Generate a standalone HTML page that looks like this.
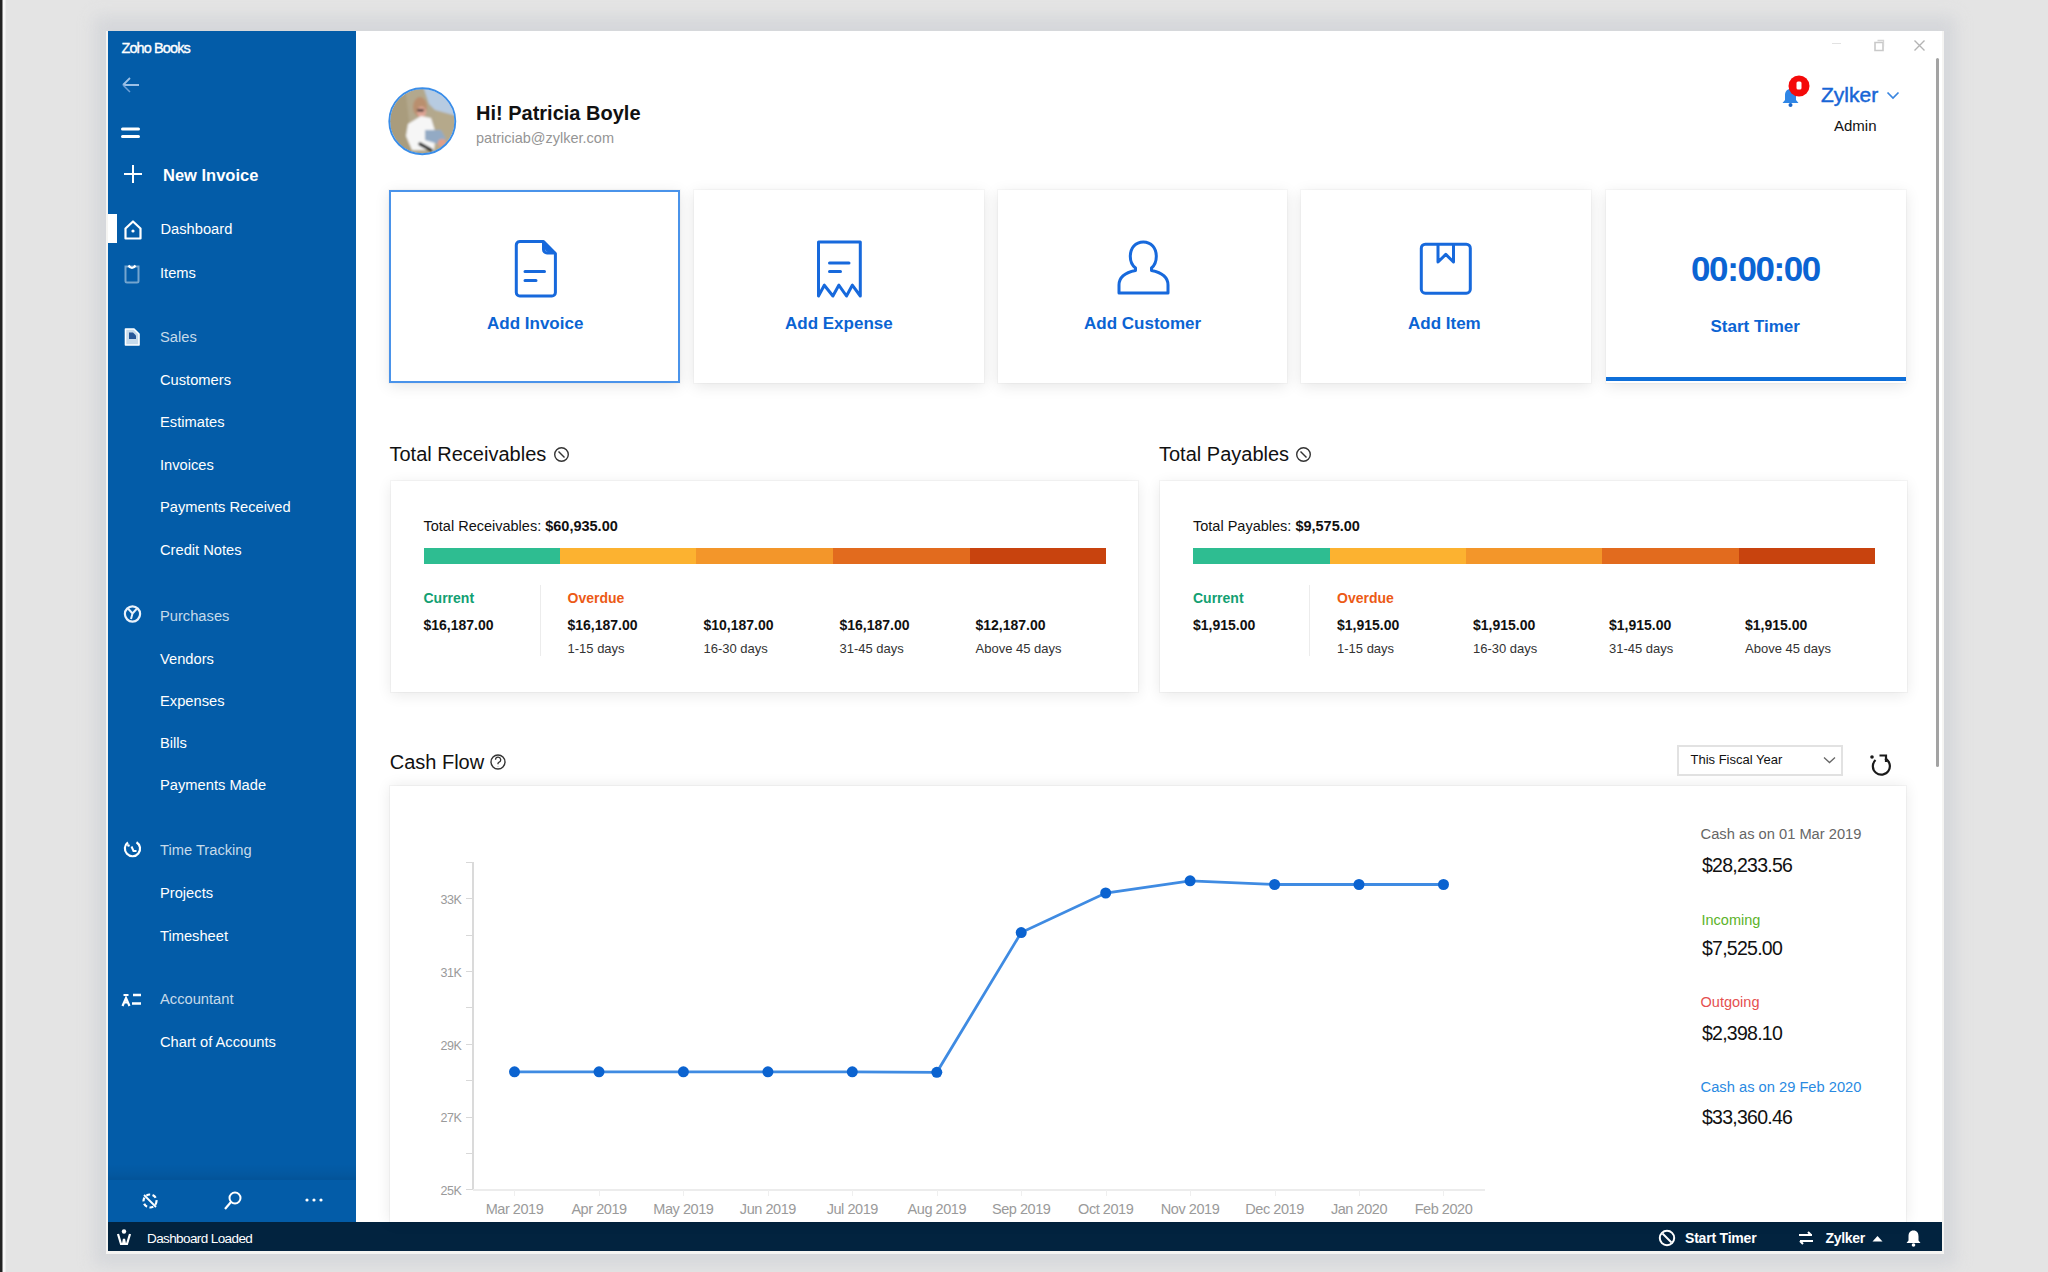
<!DOCTYPE html>
<html><head><meta charset="utf-8">
<style>
*{margin:0;padding:0;box-sizing:border-box}
html,body{width:2048px;height:1272px;overflow:hidden;background:#e4e4e4;font-family:"Liberation Sans", sans-serif}
.a{position:absolute}
.t{position:absolute;line-height:1;white-space:nowrap}
#wrap{position:absolute;left:0;top:0;width:2048px;height:1272px;}
</style></head><body><div id="wrap">
<div class="a" style="left:0px;top:0px;width:6px;height:1272px;background:linear-gradient(90deg,#232323 0,#232323 1.5px,#f8f8f8 3.5px,#f8f8f8 5px,#e4e4e4 6px)"></div>
<div class="a" style="left:94px;top:16px;width:1862px;height:1250px;background:#d3d5d9;filter:blur(8px);opacity:.85"></div>
<div class="a" style="left:106px;top:31px;width:1838px;height:1223px;background:#f5f4f2"></div>
<div class="a" style="left:108px;top:31px;width:1834px;height:1220px;background:#fff"></div>
<div class="a" style="left:108px;top:31px;width:248px;height:1191px;background:#035ca8"></div>
<div class="a" style="left:108px;top:1164px;width:248px;height:15px;background:linear-gradient(180deg,rgba(0,0,0,0) 0,rgba(0,0,0,.05) 70%,rgba(0,0,0,.09) 100%)"></div>
<div class="a" style="left:108px;top:1179px;width:248px;height:1px;background:rgba(0,0,0,.08)"></div>
<div class="t" style="left:121.5px;top:40.6px;font-size:14.5px;color:#ffffff;font-weight:normal;letter-spacing:-0.9px;-webkit-text-stroke:0.35px #fff">Zoho Books</div>
<svg class="a" style="left:120px;top:75px;" width="22" height="20" viewBox="0 0 22 20"><path d="M19 10H3.5M10 3L3 10" stroke="#9cc0e6" stroke-width="1.8" fill="none"/><path d="M3 10l7 7" stroke="#6e9fd6" stroke-width="1.5" fill="none"/></svg>
<svg class="a" style="left:120px;top:122px;" width="22" height="20" viewBox="0 0 22 20"><path d="M2.5 7h16M2.5 14.6h16" stroke="#fff" stroke-width="3" fill="none" stroke-linecap="round"/></svg>
<svg class="a" style="left:123px;top:164px;" width="20" height="20" viewBox="0 0 20 20"><path d="M10 1v18M1 10h18" stroke="#fff" stroke-width="2" fill="none"/></svg>
<div class="t" style="left:163.0px;top:166.9px;font-size:16.5px;color:#ffffff;font-weight:bold;">New Invoice</div>
<div class="a" style="left:108px;top:214px;width:9px;height:29px;background:#fff"></div>
<svg class="a" style="left:123px;top:219px;" width="20" height="22" viewBox="0 0 20 22"><path d="M2.5 9.5L10 2.5l7.5 7V19.5h-15z" stroke="#fff" stroke-width="2.2" fill="none" stroke-linejoin="round"/><circle cx="10" cy="12" r="1.6" fill="#fff"/></svg>
<div class="t" style="left:160.5px;top:222.1px;font-size:14.7px;color:#ffffff;font-weight:normal;">Dashboard</div>
<svg class="a" style="left:122px;top:262px;" width="20" height="22" viewBox="0 0 20 22"><path d="M3.5 4.5h13v14.5a1.5 1.5 0 0 1-1.5 1.5H5a1.5 1.5 0 0 1-1.5-1.5z" stroke="rgba(255,255,255,.45)" stroke-width="2" fill="none"/><path d="M6.5 3.5q3.5 5 7 0" stroke="#fff" stroke-width="2.2" fill="none"/></svg>
<div class="t" style="left:160.0px;top:266.1px;font-size:14.7px;color:#ffffff;font-weight:normal;">Items</div>
<div class="t" style="left:160.0px;top:330.1px;font-size:14.7px;color:rgba(255,255,255,.78);font-weight:normal;">Sales</div>
<div class="t" style="left:160.0px;top:373.1px;font-size:14.7px;color:#ffffff;font-weight:normal;">Customers</div>
<div class="t" style="left:160.0px;top:415.1px;font-size:14.7px;color:#ffffff;font-weight:normal;">Estimates</div>
<div class="t" style="left:160.0px;top:458.1px;font-size:14.7px;color:#ffffff;font-weight:normal;">Invoices</div>
<div class="t" style="left:160.0px;top:500.1px;font-size:14.7px;color:#ffffff;font-weight:normal;">Payments Received</div>
<div class="t" style="left:160.0px;top:543.1px;font-size:14.7px;color:#ffffff;font-weight:normal;">Credit Notes</div>
<div class="t" style="left:160.0px;top:609.1px;font-size:14.7px;color:rgba(255,255,255,.78);font-weight:normal;">Purchases</div>
<div class="t" style="left:160.0px;top:651.6px;font-size:14.7px;color:#ffffff;font-weight:normal;">Vendors</div>
<div class="t" style="left:160.0px;top:693.6px;font-size:14.7px;color:#ffffff;font-weight:normal;">Expenses</div>
<div class="t" style="left:160.0px;top:736.1px;font-size:14.7px;color:#ffffff;font-weight:normal;">Bills</div>
<div class="t" style="left:160.0px;top:778.1px;font-size:14.7px;color:#ffffff;font-weight:normal;">Payments Made</div>
<div class="t" style="left:160.0px;top:843.1px;font-size:14.7px;color:rgba(255,255,255,.78);font-weight:normal;">Time Tracking</div>
<div class="t" style="left:160.0px;top:886.1px;font-size:14.7px;color:#ffffff;font-weight:normal;">Projects</div>
<div class="t" style="left:160.0px;top:928.6px;font-size:14.7px;color:#ffffff;font-weight:normal;">Timesheet</div>
<div class="t" style="left:160.0px;top:992.1px;font-size:14.7px;color:rgba(255,255,255,.78);font-weight:normal;">Accountant</div>
<div class="t" style="left:160.0px;top:1034.6px;font-size:14.7px;color:#ffffff;font-weight:normal;">Chart of Accounts</div>
<svg class="a" style="left:123px;top:327px;" width="18" height="20" viewBox="0 0 18 20"><path d="M2.5 2h8.5l5 5v11H2.5z" fill="rgba(255,255,255,.78)" stroke="#fff" stroke-width="1.6" stroke-linejoin="round"/><path d="M6 5.5h4l3 3V12H6z" fill="#0a3f8a" opacity=".85"/></svg>
<svg class="a" style="left:122px;top:604px;" width="21" height="20" viewBox="0 0 21 20"><circle cx="10.5" cy="10" r="7.6" stroke="#eaf2fb" stroke-width="2.2" fill="none"/><path d="M6 4.5l4.5 5 4.5-5M10.5 9.5L9 15" stroke="#eaf2fb" stroke-width="2" fill="none"/></svg>
<svg class="a" style="left:122px;top:838px;" width="20" height="22" viewBox="0 0 20 22"><path d="M6 4.5A7.6 7.6 0 1 0 14.5 4.2" stroke="#fff" stroke-width="2.2" fill="none"/><circle cx="6.5" cy="7.5" r="1.3" fill="#fff"/><path d="M9.5 8.5l2 4.5 3 0" stroke="#fff" stroke-width="2" fill="none"/></svg>
<svg class="a" style="left:121px;top:990px;" width="22" height="18" viewBox="0 0 22 18"><path d="M1.5 16L5 8l3.5 8M2.5 5h5M3 12.5h4" stroke="#fff" stroke-width="2.2" fill="none"/><path d="M12 5h8M11 13.5h9" stroke="#fff" stroke-width="2.4" fill="none"/></svg>
<svg class="a" style="left:140px;top:1191px;" width="20" height="20" viewBox="0 0 20 20"><circle cx="10" cy="10" r="6.5" stroke="#fff" stroke-width="2.2" fill="none" stroke-dasharray="4 2.5"/><path d="M4 4l12 12" stroke="#fff" stroke-width="1.8"/></svg>
<svg class="a" style="left:222px;top:1190px;" width="22" height="22" viewBox="0 0 22 22"><circle cx="13" cy="8" r="5.5" stroke="#fff" stroke-width="2" fill="none"/><path d="M9 12l-6 7" stroke="#fff" stroke-width="2.2"/></svg>
<svg class="a" style="left:304px;top:1196px;" width="22" height="8" viewBox="0 0 22 8"><circle cx="3" cy="4" r="1.6" fill="#fff"/><circle cx="10" cy="4" r="1.6" fill="#fff"/><circle cx="17" cy="4" r="1.6" fill="#fff"/></svg>
<div class="a" style="left:108px;top:1222px;width:1834px;height:29px;background:#02233f"></div>
<svg class="a" style="left:116px;top:1228px;" width="16" height="18" viewBox="0 0 16 18"><circle cx="8" cy="3.5" r="2.2" fill="#fff"/><path d="M2 6l3 10h2l1-5 1 5h2l3-10" stroke="#fff" stroke-width="2.2" fill="none"/></svg>
<div class="t" style="left:147.0px;top:1231.5px;font-size:13.5px;color:#ffffff;font-weight:normal;letter-spacing:-0.6px">Dashboard Loaded</div>
<svg class="a" style="left:1658px;top:1229px;" width="19" height="18" viewBox="0 0 19 18"><circle cx="9" cy="9" r="7.2" stroke="#fff" stroke-width="2" fill="none"/><path d="M4.5 4.5l9 9" stroke="#fff" stroke-width="2"/></svg>
<div class="t" style="left:1685.0px;top:1230.7px;font-size:14px;color:#ffffff;font-weight:bold;letter-spacing:-0.2px">Start Timer</div>
<svg class="a" style="left:1798px;top:1231px;" width="16" height="14" viewBox="0 0 16 14"><path d="M1 4h13M10 1l3 3M15 10H2M5 13l-3-3" stroke="#fff" stroke-width="2" fill="none"/></svg>
<div class="t" style="left:1825.5px;top:1230.7px;font-size:14px;color:#ffffff;font-weight:bold;letter-spacing:-0.3px">Zylker</div>
<svg class="a" style="left:1872px;top:1235px;" width="11" height="7" viewBox="0 0 11 7"><path d="M0.5 6.5L5.5 1l5 5.5z" fill="#fff"/></svg>
<svg class="a" style="left:1905px;top:1229px;" width="17" height="18" viewBox="0 0 17 18"><path d="M8.5 1.5c-3.5 0-5 2.5-5 6v4L1.5 14h14l-2-2.5v-4c0-3.5-1.5-6-5-6z" fill="#fff"/><circle cx="8.5" cy="16" r="1.8" fill="#fff"/></svg>
<div class="a" style="left:1832px;top:43px;width:9px;height:1px;background:#e2e2e2"></div>
<svg class="a" style="left:1872px;top:39px;" width="13" height="13" viewBox="0 0 13 13"><path d="M3 3.5h8v8H3z" stroke="#c9c9c9" stroke-width="1.6" fill="none"/><path d="M5.5 1.5h6v6" stroke="#d4d4d4" stroke-width="1.3" fill="none"/></svg>
<svg class="a" style="left:1913px;top:39px;" width="13" height="13" viewBox="0 0 13 13"><path d="M1.5 1.5l10 10M11.5 1.5l-10 10" stroke="#b4b4b4" stroke-width="1.4"/></svg>
<div class="a" style="left:1936px;top:58px;width:3px;height:709px;background:#a3a3a3;border-radius:1.5px"></div>
<svg class="a" style="left:387px;top:86px;" width="70" height="70" viewBox="0 0 70 70">
<defs><clipPath id="cp"><circle cx="35.3" cy="35.2" r="32.2"/></clipPath>
<filter id="bl"><feGaussianBlur stdDeviation="1.1"/></filter></defs>
<g clip-path="url(#cp)"><g filter="url(#bl)">
<rect width="70" height="70" fill="#b3a88d"/>
<path d="M36 0H70V38L54 30 42 18z" fill="#b7cbe1"/>
<path d="M48 24l22 6v40H50z" fill="#b5a98b"/>
<path d="M0 0h18l8 70H0z" fill="#a99c7d"/>
<ellipse cx="33" cy="21" rx="7" ry="10" fill="#b98f6e"/>
<ellipse cx="34.5" cy="26" rx="4.5" ry="5.5" fill="#dfa595"/>
<rect x="30" y="23" width="7" height="2.5" rx="1" fill="#3a3030"/>
<path d="M21 38l13-8 10 2 5 16-2 16H25l-6-14z" fill="#f6f6f6"/>
<path d="M38 44l16 0 5 9-8 5-13-4z" fill="#93aac4"/>
<circle cx="55" cy="57" r="4" fill="#e0a08a"/>
<path d="M33 58l11 6" stroke="#1e1e1e" stroke-width="3.5" stroke-linecap="round"/>
</g></g>
<circle cx="35.3" cy="35.2" r="33" stroke="#3a8de8" stroke-width="1.9" fill="none"/></svg>
<div class="t" style="left:476.0px;top:103.4px;font-size:20px;color:#111;font-weight:bold;">Hi! Patricia Boyle</div>
<div class="t" style="left:476.0px;top:130.6px;font-size:14.5px;color:#959595;font-weight:normal;">patriciab@zylker.com</div>
<svg class="a" style="left:1781px;top:86px;" width="20" height="21" viewBox="0 0 20 21"><path d="M9.5 3c-3.5 0-5.5 2.5-5.5 6.5v4.5L1.5 17h16l-2.5-3V9.5C15 5.5 13 3 9.5 3z" fill="#2f86e6"/><circle cx="9.5" cy="19" r="2" fill="#1a66c9"/></svg>
<svg class="a" style="left:1788px;top:75px;" width="22" height="22" viewBox="0 0 22 22"><circle cx="11" cy="11" r="10.5" fill="#f40a0a"/><rect x="8.5" y="6.5" width="5" height="8" rx="1.5" fill="#fff"/></svg>
<div class="t" style="left:1821.0px;top:83.8px;font-size:21px;color:#1766d6;font-weight:normal;-webkit-text-stroke:0.45px #1766d6">Zylker</div>
<svg class="a" style="left:1886px;top:91px;" width="14" height="9" viewBox="0 0 14 9"><path d="M1.5 1.5l5.5 5.5 5.5-5.5" stroke="#3a86e0" stroke-width="1.7" fill="none"/></svg>
<div class="t" style="left:1834.0px;top:117.5px;font-size:15px;color:#111;font-weight:normal;">Admin</div>
<div class="a" style="left:389px;top:190px;width:291px;height:193px;background:#fff;box-shadow:0 0 0 1px rgba(0,0,0,.025),0 3px 14px rgba(0,0,0,.10)"></div>
<div class="a" style="left:694px;top:190px;width:290px;height:193px;background:#fff;box-shadow:0 0 0 1px rgba(0,0,0,.025),0 3px 14px rgba(0,0,0,.10)"></div>
<div class="a" style="left:998px;top:190px;width:289px;height:193px;background:#fff;box-shadow:0 0 0 1px rgba(0,0,0,.025),0 3px 14px rgba(0,0,0,.10)"></div>
<div class="a" style="left:1301px;top:190px;width:290px;height:193px;background:#fff;box-shadow:0 0 0 1px rgba(0,0,0,.025),0 3px 14px rgba(0,0,0,.10)"></div>
<div class="a" style="left:1606px;top:190px;width:300px;height:193px;background:#fff;box-shadow:0 0 0 1px rgba(0,0,0,.025),0 3px 14px rgba(0,0,0,.10)"></div>
<div class="a" style="left:389px;top:190px;width:291px;height:193px;border:2.2px solid #4a93ea;background:transparent"></div>
<div class="a" style="left:1606px;top:377px;width:300px;height:4px;background:#0f6fd9"></div>
<svg class="a" style="left:0px;top:0px;pointer-events:none" width="2048" height="400" viewBox="0 0 2048 400">
<g stroke="#1769dc" stroke-width="3" fill="none" stroke-linejoin="round" stroke-linecap="round">
<path d="M519.5 241.5H543.5L555.4 253.5V292.5a3.5 3.5 0 0 1-3.5 3.5H519.8a3.5 3.5 0 0 1-3.5-3.5V245a3.5 3.5 0 0 1 3.5-3.5z"/>
<path d="M543.5 242.5V249.5a3.5 3.5 0 0 0 3.5 3.5h7.5"/>
<path d="M525 271.6H544.5M525 280.6H536"/>
<path d="M818.5 296V242H860.3V296L852.3 285.2 846.5 296 838.8 285.2 832.9 296 824.3 285.2z"/>
<path d="M829.5 263H849M829.5 271.6H840.5"/>
<path d="M1143.3 242C1135.5 242 1130.3 248 1130.3 256.5C1130.3 261.5 1132.3 265.5 1135.5 268V270.5C1125.5 272.5 1119 277.5 1119 285V293H1168V285C1168 277.5 1161.5 272.5 1151.5 270.5V268C1154.5 265.5 1156.3 261.5 1156.3 256.5C1156.3 248 1151.2 242 1143.3 242Z"/>
<rect x="1421.3" y="244.2" width="49" height="49" rx="4"/>
<path d="M1438 245V262L1445.8 254.4 1453.5 262V245"/>
</g>
<path d="M545 244L553 252H548a3 3 0 0 1-3-3z" fill="#1769dc"/></svg>
<div class="t" style="left:487.0px;top:315.3px;font-size:17px;color:#0b64d3;font-weight:bold;">Add Invoice</div>
<div class="t" style="left:785.0px;top:315.3px;font-size:17px;color:#0b64d3;font-weight:bold;">Add Expense</div>
<div class="t" style="left:1084.0px;top:315.3px;font-size:17px;color:#0b64d3;font-weight:bold;">Add Customer</div>
<div class="t" style="left:1408.0px;top:315.3px;font-size:17px;color:#0b64d3;font-weight:bold;">Add Item</div>
<div class="t" style="left:1691.0px;top:251.4px;font-size:35px;color:#0b64d3;font-weight:bold;letter-spacing:-1.4px">00:00:00</div>
<div class="t" style="left:1710.5px;top:318.3px;font-size:17px;color:#0b64d3;font-weight:bold;">Start Timer</div>
<div class="t" style="left:389.5px;top:444.1px;font-size:20px;color:#111;font-weight:normal;">Total Receivables</div>
<svg class="a" style="left:552.5px;top:446px;" width="17" height="17" viewBox="0 0 17 17"><circle cx="8.5" cy="8.5" r="6.8" stroke="#333" stroke-width="1.4" fill="none"/><path d="M5.5 5.5l6 6" stroke="#333" stroke-width="1.4"/></svg>
<div class="a" style="left:390.5px;top:481px;width:747px;height:211px;background:#fff;box-shadow:0 0 0 1px rgba(0,0,0,.03),0 3px 14px rgba(0,0,0,.09)"></div>
<div class="t" style="left:423.5px;top:519.1px;font-size:14.5px;color:#111;font-weight:normal;">Total Receivables: <b>$60,935.00</b></div>
<div class="a" style="left:424px;top:548px;width:137px;height:16px;background:#2ebd91"></div>
<div class="a" style="left:560px;top:548px;width:137px;height:16px;background:#fcb230"></div>
<div class="a" style="left:696px;top:548px;width:137px;height:16px;background:#f3962a"></div>
<div class="a" style="left:833px;top:548px;width:137px;height:16px;background:#e26b1e"></div>
<div class="a" style="left:970px;top:548px;width:136px;height:16px;background:#c8430e"></div>
<div class="t" style="left:423.5px;top:590.5px;font-size:14px;color:#12a072;font-weight:bold;">Current</div>
<div class="t" style="left:423.5px;top:618.0px;font-size:14px;color:#111;font-weight:bold;">$16,187.00</div>
<div class="a" style="left:539.5px;top:585px;width:1px;height:71px;background:#ececec"></div>
<div class="t" style="left:567.5px;top:590.5px;font-size:14px;color:#ec5a16;font-weight:bold;">Overdue</div>
<div class="t" style="left:567.5px;top:618.0px;font-size:14px;color:#111;font-weight:bold;">$16,187.00</div>
<div class="t" style="left:567.5px;top:642.3px;font-size:13px;color:#333;font-weight:normal;">1-15 days</div>
<div class="t" style="left:703.5px;top:618.0px;font-size:14px;color:#111;font-weight:bold;">$10,187.00</div>
<div class="t" style="left:703.5px;top:642.3px;font-size:13px;color:#333;font-weight:normal;">16-30 days</div>
<div class="t" style="left:839.5px;top:618.0px;font-size:14px;color:#111;font-weight:bold;">$16,187.00</div>
<div class="t" style="left:839.5px;top:642.3px;font-size:13px;color:#333;font-weight:normal;">31-45 days</div>
<div class="t" style="left:975.5px;top:618.0px;font-size:14px;color:#111;font-weight:bold;">$12,187.00</div>
<div class="t" style="left:975.5px;top:642.3px;font-size:13px;color:#333;font-weight:normal;">Above 45 days</div>
<div class="t" style="left:1159.0px;top:444.1px;font-size:20px;color:#111;font-weight:normal;">Total Payables</div>
<svg class="a" style="left:1295px;top:446px;" width="17" height="17" viewBox="0 0 17 17"><circle cx="8.5" cy="8.5" r="6.8" stroke="#333" stroke-width="1.4" fill="none"/><path d="M5.5 5.5l6 6" stroke="#333" stroke-width="1.4"/></svg>
<div class="a" style="left:1160px;top:481px;width:747px;height:211px;background:#fff;box-shadow:0 0 0 1px rgba(0,0,0,.03),0 3px 14px rgba(0,0,0,.09)"></div>
<div class="t" style="left:1193.0px;top:519.1px;font-size:14.5px;color:#111;font-weight:normal;">Total Payables: <b>$9,575.00</b></div>
<div class="a" style="left:1193px;top:548px;width:137px;height:16px;background:#2ebd91"></div>
<div class="a" style="left:1330px;top:548px;width:137px;height:16px;background:#fcb230"></div>
<div class="a" style="left:1466px;top:548px;width:137px;height:16px;background:#f3962a"></div>
<div class="a" style="left:1602px;top:548px;width:137px;height:16px;background:#e26b1e"></div>
<div class="a" style="left:1739px;top:548px;width:136px;height:16px;background:#c8430e"></div>
<div class="t" style="left:1193.0px;top:590.5px;font-size:14px;color:#12a072;font-weight:bold;">Current</div>
<div class="t" style="left:1193.0px;top:618.0px;font-size:14px;color:#111;font-weight:bold;">$1,915.00</div>
<div class="a" style="left:1309px;top:585px;width:1px;height:71px;background:#ececec"></div>
<div class="t" style="left:1337.0px;top:590.5px;font-size:14px;color:#ec5a16;font-weight:bold;">Overdue</div>
<div class="t" style="left:1337.0px;top:618.0px;font-size:14px;color:#111;font-weight:bold;">$1,915.00</div>
<div class="t" style="left:1337.0px;top:642.3px;font-size:13px;color:#333;font-weight:normal;">1-15 days</div>
<div class="t" style="left:1473.0px;top:618.0px;font-size:14px;color:#111;font-weight:bold;">$1,915.00</div>
<div class="t" style="left:1473.0px;top:642.3px;font-size:13px;color:#333;font-weight:normal;">16-30 days</div>
<div class="t" style="left:1609.0px;top:618.0px;font-size:14px;color:#111;font-weight:bold;">$1,915.00</div>
<div class="t" style="left:1609.0px;top:642.3px;font-size:13px;color:#333;font-weight:normal;">31-45 days</div>
<div class="t" style="left:1745.0px;top:618.0px;font-size:14px;color:#111;font-weight:bold;">$1,915.00</div>
<div class="t" style="left:1745.0px;top:642.3px;font-size:13px;color:#333;font-weight:normal;">Above 45 days</div>
<div class="t" style="left:389.7px;top:751.9px;font-size:20px;color:#111;font-weight:normal;">Cash Flow</div>
<svg class="a" style="left:489px;top:753px;" width="18" height="18" viewBox="0 0 18 18"><circle cx="9" cy="9" r="7" stroke="#333" stroke-width="1.4" fill="none"/><path d="M6.5 6.8a2.6 2.6 0 1 1 3.3 2.5c-.6.2-.8.6-.8 1.2v.8M9 13.2v.4" stroke="#333" stroke-width="1.3" fill="none"/></svg>
<div class="a" style="left:1677px;top:745px;width:166px;height:31px;border:2px solid #e2e2e2;background:#fff"></div>
<div class="t" style="left:1690.5px;top:753.0px;font-size:13px;color:#111;font-weight:normal;">This Fiscal Year</div>
<svg class="a" style="left:1823px;top:756px;" width="13" height="8" viewBox="0 0 13 8"><path d="M1 1.5l5.5 5 5.5-5" stroke="#666" stroke-width="1.3" fill="none"/></svg>
<svg class="a" style="left:1868px;top:752px;" width="26" height="26" viewBox="0 0 26 26"><path d="M7.5 8A8.5 8.5 0 1 0 17 6.5" stroke="#1a1a1a" stroke-width="2.2" fill="none"/><path d="M11.5 3.5h6.5v6.5" stroke="#1a1a1a" stroke-width="2.2" fill="none"/><circle cx="4" cy="5" r="1.8" fill="#1a1a1a"/></svg>
<div class="a" style="left:390px;top:786px;width:1516px;height:436px;background:#fff;box-shadow:0 0 0 1px rgba(0,0,0,.03),0 0 14px rgba(0,0,0,.09)"></div>
<div class="a" style="left:472px;top:862px;width:2px;height:328px;background:#dadada"></div>
<div class="a" style="left:473px;top:1189px;width:1012px;height:2px;background:#ececec"></div>
<div class="a" style="left:466px;top:862px;width:6px;height:1px;background:#d8d8d8"></div>
<div class="a" style="left:466px;top:898px;width:6px;height:1px;background:#d8d8d8"></div>
<div class="a" style="left:466px;top:935px;width:6px;height:1px;background:#d8d8d8"></div>
<div class="a" style="left:466px;top:971px;width:6px;height:1px;background:#d8d8d8"></div>
<div class="a" style="left:466px;top:1007px;width:6px;height:1px;background:#d8d8d8"></div>
<div class="a" style="left:466px;top:1044px;width:6px;height:1px;background:#d8d8d8"></div>
<div class="a" style="left:466px;top:1080px;width:6px;height:1px;background:#d8d8d8"></div>
<div class="a" style="left:466px;top:1117px;width:6px;height:1px;background:#d8d8d8"></div>
<div class="a" style="left:466px;top:1153px;width:6px;height:1px;background:#d8d8d8"></div>
<div class="a" style="left:466px;top:1189px;width:6px;height:1px;background:#d8d8d8"></div>
<div class="t" style="left:440.5px;top:894.1px;font-size:12.5px;color:#9a9a9a;font-weight:normal;letter-spacing:-0.4px">33K</div>
<div class="t" style="left:440.5px;top:966.8px;font-size:12.5px;color:#9a9a9a;font-weight:normal;letter-spacing:-0.4px">31K</div>
<div class="t" style="left:440.5px;top:1039.6px;font-size:12.5px;color:#9a9a9a;font-weight:normal;letter-spacing:-0.4px">29K</div>
<div class="t" style="left:440.5px;top:1112.4px;font-size:12.5px;color:#9a9a9a;font-weight:normal;letter-spacing:-0.4px">27K</div>
<div class="t" style="left:440.5px;top:1185.2px;font-size:12.5px;color:#9a9a9a;font-weight:normal;letter-spacing:-0.4px">25K</div>
<div class="a" style="left:514px;top:1190px;width:1px;height:6px;background:#efefef"></div>
<div class="t" style="left:474.5px;top:1202.4px;width:80px;text-align:center;font-size:14.5px;letter-spacing:-0.45px;color:#9a9a9a">Mar 2019</div>
<div class="a" style="left:599px;top:1190px;width:1px;height:6px;background:#efefef"></div>
<div class="t" style="left:559.0px;top:1202.4px;width:80px;text-align:center;font-size:14.5px;letter-spacing:-0.45px;color:#9a9a9a">Apr 2019</div>
<div class="a" style="left:683px;top:1190px;width:1px;height:6px;background:#efefef"></div>
<div class="t" style="left:643.4px;top:1202.4px;width:80px;text-align:center;font-size:14.5px;letter-spacing:-0.45px;color:#9a9a9a">May 2019</div>
<div class="a" style="left:768px;top:1190px;width:1px;height:6px;background:#efefef"></div>
<div class="t" style="left:727.9px;top:1202.4px;width:80px;text-align:center;font-size:14.5px;letter-spacing:-0.45px;color:#9a9a9a">Jun 2019</div>
<div class="a" style="left:852px;top:1190px;width:1px;height:6px;background:#efefef"></div>
<div class="t" style="left:812.3px;top:1202.4px;width:80px;text-align:center;font-size:14.5px;letter-spacing:-0.45px;color:#9a9a9a">Jul 2019</div>
<div class="a" style="left:937px;top:1190px;width:1px;height:6px;background:#efefef"></div>
<div class="t" style="left:896.8px;top:1202.4px;width:80px;text-align:center;font-size:14.5px;letter-spacing:-0.45px;color:#9a9a9a">Aug 2019</div>
<div class="a" style="left:1021px;top:1190px;width:1px;height:6px;background:#efefef"></div>
<div class="t" style="left:981.2px;top:1202.4px;width:80px;text-align:center;font-size:14.5px;letter-spacing:-0.45px;color:#9a9a9a">Sep 2019</div>
<div class="a" style="left:1106px;top:1190px;width:1px;height:6px;background:#efefef"></div>
<div class="t" style="left:1065.7px;top:1202.4px;width:80px;text-align:center;font-size:14.5px;letter-spacing:-0.45px;color:#9a9a9a">Oct 2019</div>
<div class="a" style="left:1190px;top:1190px;width:1px;height:6px;background:#efefef"></div>
<div class="t" style="left:1150.1px;top:1202.4px;width:80px;text-align:center;font-size:14.5px;letter-spacing:-0.45px;color:#9a9a9a">Nov 2019</div>
<div class="a" style="left:1275px;top:1190px;width:1px;height:6px;background:#efefef"></div>
<div class="t" style="left:1234.6px;top:1202.4px;width:80px;text-align:center;font-size:14.5px;letter-spacing:-0.45px;color:#9a9a9a">Dec 2019</div>
<div class="a" style="left:1359px;top:1190px;width:1px;height:6px;background:#efefef"></div>
<div class="t" style="left:1319.0px;top:1202.4px;width:80px;text-align:center;font-size:14.5px;letter-spacing:-0.45px;color:#9a9a9a">Jan 2020</div>
<div class="a" style="left:1443px;top:1190px;width:1px;height:6px;background:#efefef"></div>
<div class="t" style="left:1403.5px;top:1202.4px;width:80px;text-align:center;font-size:14.5px;letter-spacing:-0.45px;color:#9a9a9a">Feb 2020</div>
<svg class="a" style="left:390px;top:786px;" width="1200" height="420" viewBox="0 0 1200 420"><polyline points="124.5,285.8 209.0,285.8 293.4,285.8 377.9,285.8 462.3,285.8 546.8,286.3 631.2,146.6 715.7,107.0 800.1,94.8 884.6,98.5 969.0,98.5 1053.5,98.5" stroke="#3f8be2" stroke-width="2.8" fill="none"/><circle cx="124.5" cy="285.8" r="5.5" fill="#0b63d0"/><circle cx="209.0" cy="285.8" r="5.5" fill="#0b63d0"/><circle cx="293.4" cy="285.8" r="5.5" fill="#0b63d0"/><circle cx="377.9" cy="285.8" r="5.5" fill="#0b63d0"/><circle cx="462.3" cy="285.8" r="5.5" fill="#0b63d0"/><circle cx="546.8" cy="286.3" r="5.5" fill="#0b63d0"/><circle cx="631.2" cy="146.6" r="5.5" fill="#0b63d0"/><circle cx="715.7" cy="107.0" r="5.5" fill="#0b63d0"/><circle cx="800.1" cy="94.8" r="5.5" fill="#0b63d0"/><circle cx="884.6" cy="98.5" r="5.5" fill="#0b63d0"/><circle cx="969.0" cy="98.5" r="5.5" fill="#0b63d0"/><circle cx="1053.5" cy="98.5" r="5.5" fill="#0b63d0"/></svg>
<div class="t" style="left:1700.6px;top:826.7px;font-size:14.7px;color:#666;font-weight:normal;">Cash as on 01 Mar 2019</div>
<div class="t" style="left:1702.0px;top:855.5px;font-size:19.5px;color:#111;font-weight:normal;letter-spacing:-0.75px">$28,233.56</div>
<div class="t" style="left:1701.5px;top:912.7px;font-size:14.5px;color:#5cb32a;font-weight:normal;">Incoming</div>
<div class="t" style="left:1702.0px;top:939.3px;font-size:19.5px;color:#111;font-weight:normal;letter-spacing:-0.75px">$7,525.00</div>
<div class="t" style="left:1700.6px;top:994.9px;font-size:14.5px;color:#e55050;font-weight:normal;">Outgoing</div>
<div class="t" style="left:1702.0px;top:1023.8px;font-size:19.5px;color:#111;font-weight:normal;letter-spacing:-0.75px">$2,398.10</div>
<div class="t" style="left:1700.6px;top:1079.8px;font-size:14.7px;color:#2a8ae2;font-weight:normal;">Cash as on 29 Feb 2020</div>
<div class="t" style="left:1702.0px;top:1107.5px;font-size:19.5px;color:#111;font-weight:normal;letter-spacing:-0.75px">$33,360.46</div>
</div></body></html>
